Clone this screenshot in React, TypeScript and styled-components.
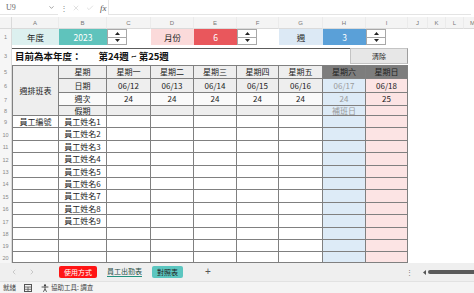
import React from 'react';
import styled, { createGlobalStyle, css } from 'styled-components';
import { ChevronDown, ChevronLeft, ChevronRight, X, Check } from 'lucide-react';

const GlobalStyle = createGlobalStyle`
  html, body { margin: 0; padding: 0; background: #fff; overflow: hidden; }
  body { font-family: "Noto Sans CJK TC", "Noto Sans", sans-serif; color: #222; }
  *, *::before, *::after { box-sizing: border-box; }
`;

const Window = styled.div`
  width: 474px;
  height: 293px;
  display: flex;
  flex-direction: column;
  overflow: hidden;
  background: #fff;
`;

/* ---------- formula bar ---------- */
const FormulaBar = styled.div`
  height: 17px;
  flex: none;
  display: flex;
  align-items: stretch;
  padding-bottom: 2px;
  background: #fff;
`;

const NameBox = styled.div`
  width: 58px;
  display: flex;
  align-items: center;
  justify-content: space-between;
  padding: 0 3px 0 6px;
  font-family: "Liberation Serif", serif;
  font-size: 8px;
  color: #666;
  border-bottom: 1px solid #e4e4e4;
`;

const Divider = styled.div`
  width: 12px;
  display: flex;
  align-items: center;
  justify-content: center;
  font-size: 8px;
  color: #8a8a8a;
`;

const FuncIcons = styled.div`
  width: 38px;
  display: flex;
  align-items: center;
  gap: 6px;
  padding-left: 2px;
  color: #c2c2c2;
`;

const Fx = styled.span`
  font-family: "Liberation Serif", serif;
  font-style: italic;
  font-size: 9px;
  color: #555;
`;

const FormulaInput = styled.div`
  flex: 1;
  margin-right: 3px;
  border-left: 1px solid #e6e6e6;
  border-bottom: 1px solid #e4e4e4;
`;

/* ---------- sheet grid ---------- */
const Sheet = styled.div`
  flex: none;
  height: 246px;
  display: grid;
  grid-template-columns: 12px 47px 48px 44px 43px 43px 42px 44px 43px 42px 20px 18px 18px 18px;
  grid-template-rows:
    12px 16px 3px 16px 1px 14px 14px 13px 10px 12px
    13px 12px 13px 12px 12px 13px 12px 13px 12px 12px 11px;
  overflow: hidden;
`;

interface At {
  $col: number;
  $row: number;
  $cols?: number;
  $rows?: number;
}

const at = css<At>`
  grid-column: ${(p) => p.$col + 1} / span ${(p) => p.$cols ?? 1};
  grid-row: ${(p) => p.$row + 1} / span ${(p) => p.$rows ?? 1};
`;

const Corner = styled.div<At>`
  ${at};
  background: #f4f4f4;
  border-bottom: 1px solid #dadada;
  border-right: 1px solid #dadada;
`;

const ColHead = styled.div<At>`
  ${at};
  background: #f4f4f4;
  border-bottom: 1px solid #dadada;
  border-right: 1px solid #ebebeb;
  display: flex;
  align-items: center;
  justify-content: center;
  font-family: "Liberation Sans", sans-serif;
  font-size: 6px;
  color: #777;
`;

const RowHead = styled.div<At>`
  ${at};
  background: #f6f6f6;
  border-right: 1px solid #dadada;
  display: flex;
  align-items: center;
  justify-content: center;
  font-family: "Liberation Sans", sans-serif;
  font-size: 5.5px;
  color: #888;
  overflow: hidden;
`;

const Field = styled.div<At & { $bg: string; $fg?: string }>`
  ${at};
  background: ${(p) => p.$bg};
  color: ${(p) => p.$fg ?? '#222'};
  display: flex;
  align-items: center;
  justify-content: center;
  font-size: 8.5px;
  line-height: 1;
`;

const Spinner = styled.div<At>`
  ${at};
  width: 20px;
  display: flex;
  flex-direction: column;
  border: 1px solid #a8a8a8;
  background: #fff;
`;

const SpinHalf = styled.div<{ $lower?: boolean }>`
  flex: 1;
  display: flex;
  align-items: center;
  justify-content: center;
  border-top: ${(p) => (p.$lower ? '1px solid #a8a8a8' : 'none')};
`;

const Banner = styled.div<At>`
  ${at};
  border-top: 1px solid #5c5c5c;
  display: flex;
  align-items: center;
  gap: 17px;
  padding-left: 3px;
  font-size: 9.5px;
  font-weight: 700;
  color: #111;
  white-space: nowrap;
  line-height: 1;
`;

const ClearButton = styled.div<At>`
  ${at};
  justify-self: end;
  width: 58px;
  background: #e7e7e7;
  border: 1px solid #c4c4c4;
  border-right-color: #9e9e9e;
  display: flex;
  align-items: center;
  justify-content: center;
  font-size: 7px;
  color: #222;
  line-height: 1;
`;

const TCell = styled.div<At & { $bg?: string; $fg?: string; $top?: boolean; $left?: boolean }>`
  ${at};
  background: ${(p) => p.$bg ?? '#fff'};
  color: ${(p) => p.$fg ?? '#222'};
  border-right: 1px solid #808080;
  border-bottom: 1px solid #808080;
  ${(p) => (p.$top ? 'border-top: 1px solid #808080;' : '')}
  ${(p) => (p.$left ? 'border-left: 1px solid #808080;' : '')}
  display: flex;
  align-items: center;
  justify-content: center;
  font-size: 8px;
  line-height: 1;
  white-space: nowrap;
  overflow: hidden;
`;

/* ---------- sheet tabs ---------- */
const TabBar = styled.div`
  height: 18px;
  flex: none;
  display: flex;
  align-items: center;
  background: #efefef;
  padding-left: 10px;
  font-size: 7px;
  line-height: 1;
`;

const NavArrow = styled.span`
  width: 8px;
  display: flex;
  justify-content: center;
  color: #a0a0a0;
  margin-right: 10px;
`;

const Tabs = styled.div`
  display: flex;
  align-items: center;
  gap: 5px;
  margin-left: 13px;
`;

const Tab = styled.div<{ $bg?: string; $fg?: string }>`
  height: 12px;
  padding: 0 5px;
  border-radius: 2px;
  background: ${(p) => p.$bg ?? 'transparent'};
  color: ${(p) => p.$fg ?? '#222'};
  display: flex;
  align-items: center;
`;

const ActiveLabel = styled.span`
  padding-bottom: 1px;
  border-bottom: 1.5px solid #23917f;
  color: #1d4d45;
`;

const AddTab = styled.span`
  margin-left: 22px;
  font-family: "Liberation Sans", sans-serif;
  font-size: 10px;
  color: #555;
`;

const ScrollArea = styled.div`
  margin-left: auto;
  display: flex;
  align-items: center;
  height: 100%;
`;

const Grip = styled.span`
  font-size: 7px;
  color: #777;
  margin-right: 10px;
`;

const Thumb = styled.div`
  width: 46px;
  height: 4px;
  border-radius: 2px 0 0 2px;
  background: #5a5a5a;
  margin-left: 2px;
`;

/* ---------- status bar ---------- */
const StatusBar = styled.div`
  height: 12px;
  flex: none;
  display: flex;
  align-items: center;
  background: #f4f4f4;
  border-top: 1px solid #e2e2e2;
  padding-left: 3px;
  font-size: 6.5px;
  color: #444;
  line-height: 1;
`;

const StatusItem = styled.span`
  display: flex;
  align-items: center;
  gap: 2px;
  margin-right: 9px;
`;

/* ---------- small drawings ---------- */
const TriUp = () => (
  <svg width="5" height="3" viewBox="0 0 5 3">
    <polygon points="2.5,0 5,3 0,3" fill="#222" />
  </svg>
);
const TriDown = () => (
  <svg width="5" height="3" viewBox="0 0 5 3">
    <polygon points="0,0 5,0 2.5,3" fill="#222" />
  </svg>
);

const SpinBox = ({ col, row }: { col: number; row: number }) => (
  <Spinner $col={col} $row={row}>
    <SpinHalf>
      <TriUp />
    </SpinHalf>
    <SpinHalf $lower>
      <TriDown />
    </SpinHalf>
  </Spinner>
);

const SheetIcon = () => (
  <svg width="8" height="8" viewBox="0 0 8 8">
    <rect x="0.5" y="0.5" width="7" height="7" fill="none" stroke="#555" strokeWidth="1" />
    <line x1="0.5" y1="3" x2="7.5" y2="3" stroke="#555" strokeWidth="0.8" />
    <line x1="0.5" y1="5.3" x2="7.5" y2="5.3" stroke="#555" strokeWidth="0.8" />
    <line x1="4" y1="3" x2="4" y2="7.5" stroke="#555" strokeWidth="0.8" />
  </svg>
);

const AccessIcon = () => (
  <svg width="8" height="8" viewBox="0 0 8 8">
    <circle cx="4" cy="1.4" r="1.1" fill="#444" />
    <path d="M0.6 3 L7.4 3 M4 3 L4 5 M4 5 L2.4 7.8 M4 5 L5.6 7.8" stroke="#444" strokeWidth="0.9" fill="none" />
  </svg>
);

/* ---------- data ---------- */
const letters = ['A', 'B', 'C', 'D', 'E', 'F', 'G', 'H', 'I', 'J', 'K', 'L', 'M'];
const rowLabels: Record<number, string> = {};
for (let r = 1; r <= 20; r++) if (r !== 2 && r !== 4) rowLabels[r] = String(r);

const days = ['星期一', '星期二', '星期三', '星期四', '星期五', '星期六', '星期日'];
const dates = ['06/12', '06/13', '06/14', '06/15', '06/16', '06/17', '06/18'];
const weeks = ['24', '24', '24', '24', '24', '24', '25'];

const HEAD = '#eeeeee';
const SAT = '#ddebf7';
const SUN = '#fce4e4';
const DARK = '#7d7d7d';
const MUTED = '#9a9a9a';

function cellBg(col: number, row: number): string {
  if (row === 5) return col >= 8 ? DARK : HEAD;
  if (col === 8) return SAT;
  if (col === 9) return SUN;
  if (row <= 8) return row === 7 ? '#fafafa' : HEAD;
  return '#fff';
}

function cellText(col: number, row: number): string {
  if (col === 2) {
    if (row === 5) return '星期';
    if (row === 6) return '日期';
    if (row === 7) return '週次';
    if (row === 8) return '假期';
    if (row >= 9 && row <= 17) return `員工姓名${row - 8}`;
    return '';
  }
  const i = col - 3;
  if (row === 5) return days[i];
  if (row === 6) return dates[i];
  if (row === 7) return weeks[i];
  if (row === 8 && col === 8) return '補班日';
  return '';
}

export default function App() {
  const tableCells: React.ReactNode[] = [];
  for (let row = 5; row <= 20; row++) {
    if (row === 5) {
      tableCells.push(
        <TCell key="a5" $col={1} $row={5} $rows={4} $bg={HEAD} $top $left>
          週排班表
        </TCell>
      );
    } else if (row > 8) {
      tableCells.push(
        <TCell key={`a${row}`} $col={1} $row={row} $left>
          {row === 9 ? '員工編號' : ''}
        </TCell>
      );
    }
    for (let col = 2; col <= 9; col++) {
      const muted = col === 8 && row >= 6 && row <= 8;
      tableCells.push(
        <TCell
          key={`${col}-${row}`}
          $col={col}
          $row={row}
          $bg={cellBg(col, row)}
          $fg={muted ? MUTED : undefined}
          $top={row === 5}
        >
          {cellText(col, row)}
        </TCell>
      );
    }
  }

  return (
    <Window>
      <GlobalStyle />
      <FormulaBar>
        <NameBox>
          <span>U9</span>
          <ChevronDown size={7} color="#666" strokeWidth={2} />
        </NameBox>
        <Divider>⋮</Divider>
        <FuncIcons>
          <X size={8} strokeWidth={1.5} />
          <Check size={8} strokeWidth={1.5} />
          <Fx>fx</Fx>
        </FuncIcons>
        <FormulaInput />
      </FormulaBar>

      <Sheet>
        <Corner $col={0} $row={0} />
        {letters.map((l, i) => (
          <ColHead key={l} $col={i + 1} $row={0}>
            {l}
          </ColHead>
        ))}
        {Array.from({ length: 20 }, (_, i) => i + 1).map((r) => (
          <RowHead key={r} $col={0} $row={r}>
            {rowLabels[r] ?? ''}
          </RowHead>
        ))}

        <Field $col={1} $row={1} $bg="#dcf0ef">年度</Field>
        <Field $col={2} $row={1} $bg="#5fc3bc" $fg="#fff">2023</Field>
        <SpinBox col={3} row={1} />
        <Field $col={4} $row={1} $bg="#fbdada">月份</Field>
        <Field $col={5} $row={1} $bg="#e9575c" $fg="#fff">6</Field>
        <SpinBox col={6} row={1} />
        <Field $col={7} $row={1} $bg="#dce9f5">週</Field>
        <Field $col={8} $row={1} $bg="#5aa0d8" $fg="#fff">3</Field>
        <SpinBox col={9} row={1} />

        <Banner $col={1} $row={3} $cols={8}>
          <span>目前為本年度：</span>
          <span>第24週 ~ 第25週</span>
        </Banner>
        <ClearButton $col={8} $row={3} $cols={2}>清除</ClearButton>

        {tableCells}
      </Sheet>

      <TabBar>
        <NavArrow>
          <ChevronLeft size={8} strokeWidth={1.5} />
        </NavArrow>
        <NavArrow>
          <ChevronRight size={8} strokeWidth={1.5} />
        </NavArrow>
        <Tabs>
          <Tab $bg="#ff1414" $fg="#fff">使用方式</Tab>
          <Tab>
            <ActiveLabel>員工出勤表</ActiveLabel>
          </Tab>
          <Tab $bg="#5cc6c0">對照表</Tab>
        </Tabs>
        <AddTab>+</AddTab>
        <ScrollArea>
          <Grip>⋮</Grip>
          <TriLeft />
          <Thumb />
        </ScrollArea>
      </TabBar>

      <StatusBar>
        <StatusItem style={{ marginRight: 8 }}>就緒</StatusItem>
        <StatusItem>
          <SheetIcon />
        </StatusItem>
        <StatusItem>
          <AccessIcon />
          協助工具: 調查
        </StatusItem>
      </StatusBar>
    </Window>
  );
}

function TriLeft() {
  return (
    <svg width="3" height="5" viewBox="0 0 3 5">
      <polygon points="3,0 3,5 0,2.5" fill="#555" />
    </svg>
  );
}
